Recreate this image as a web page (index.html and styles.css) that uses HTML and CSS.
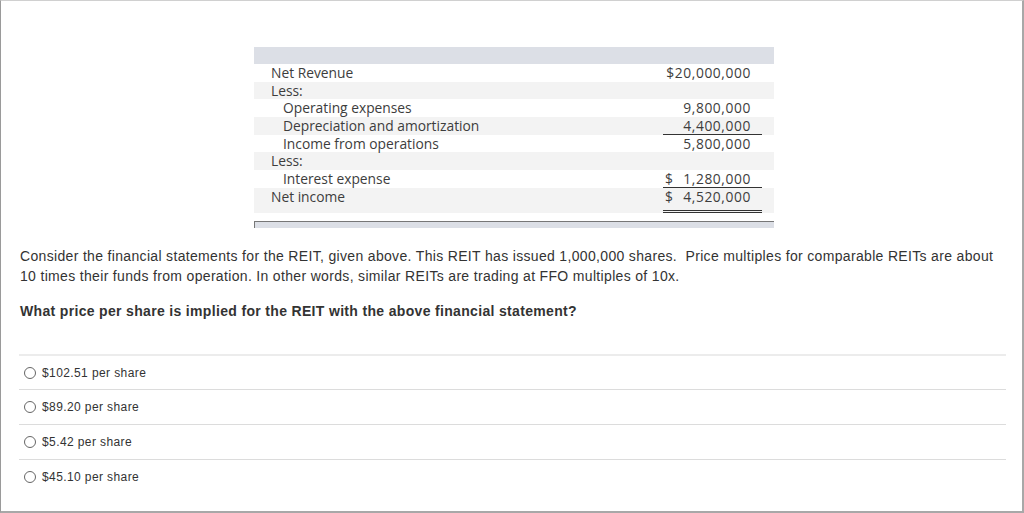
FILE: index.html
```html
<!DOCTYPE html>
<html>
<head>
<meta charset="utf-8">
<link rel="stylesheet" href="styles.css">
</head>
<body>
<div class="frame">
  <div class="figure">
    <div class="fig-head"></div>
    <div class="row white"><span class="lbl">Net Revenue</span><span class="num">$20,000,000</span></div>
    <div class="row gray"><span class="lbl">Less:</span><span class="num"></span></div>
    <div class="row white"><span class="lbl ind">Operating expenses</span><span class="num">9,800,000</span></div>
    <div class="row gray"><span class="lbl ind">Depreciation and amortization</span><span class="num ul">4,400,000</span></div>
    <div class="row white"><span class="lbl ind">Income from operations</span><span class="num">5,800,000</span></div>
    <div class="row gray"><span class="lbl">Less:</span><span class="num"></span></div>
    <div class="row white"><span class="lbl ind">Interest expense</span><span class="num ul split"><span>$</span><span>1,280,000</span></span></div>
    <div class="row gray last"><span class="lbl">Net income</span><span class="num dul split"><span>$</span><span>4,520,000</span></span></div>
    <div class="fig-foot"></div>
  </div>
  <div class="question">
    <p class="stem">Consider the financial statements for the REIT, given above. This REIT has issued 1,000,000 shares.&nbsp; Price multiples for comparable REITs are about 10 times their funds from operation. In other words, similar REITs are trading at FFO multiples of 10x.</p>
    <p class="ask">What price per share is implied for the REIT with the above financial statement?</p>
  </div>
  <ul class="options">
    <li class="opt first"><span class="radio"></span>$102.51 per share</li>
    <li class="opt"><span class="radio"></span>$89.20 per share</li>
    <li class="opt"><span class="radio"></span>$5.42 per share</li>
    <li class="opt"><span class="radio"></span>$45.10 per share</li>
  </ul>
</div>
</body>
</html>
```
FILE: styles.css
```css
html, body {
  margin: 0;
  padding: 0;
  background: #fff;
}
.frame {
  width: 1024px;
  height: 513px;
  box-sizing: border-box;
  border-top: 1px solid #d0d0d0;
  border-left: 1px solid #9a9a9a;
  border-right: 2px solid #a8a8a8;
  border-bottom: 2px solid #a8a8a8;
  overflow: hidden;
}
.figure {
  width: 520px;
  margin: 46px 0 0 253px;
  font-family: "Open Sans", sans-serif;
  font-size: 13.8px;
  color: #3d3d3d;
}
.fig-head {
  height: 17px;
  background: #dcdfe6;
}
.row {
  height: 17.7px;
  display: flex;
  justify-content: space-between;
  align-items: flex-start;
  line-height: 17.7px;
}
.row.white { background: #fff; }
.row.gray { background: #f3f3f3; }
.row.last { height: 25px; }
.lbl { padding-left: 17px; }
.lbl.ind { padding-left: 29px; }
.num {
  width: 99px;
  height: 17.7px;
  margin-right: 12px;
  padding-right: 11px;
  box-sizing: border-box;
  text-align: right;
  letter-spacing: 0.6px;
}
.num.ul { border-bottom: 1px solid #333; }
.row.last .num {
  height: 25px;
  border-bottom: 3px double #333;
}
.num.split {
  display: flex;
  justify-content: space-between;
  padding-left: 2px;
}
.fig-foot {
  margin-top: 8px;
  height: 6px;
  background: #dcdfe6;
  border-top: 1px solid #777;
  border-left: 1px solid #777;
}
.question {
  margin: 18px 0 0 19px;
  width: 975px;
  font-family: "Liberation Sans", Arial, sans-serif;
  font-size: 14px;
  letter-spacing: 0.33px;
  color: #333;
  line-height: 20.5px;
}
.question p { margin: 0; }
.question .ask {
  font-weight: bold;
  margin-top: 14px;
}
.options {
  list-style: none;
  margin: 33px 0 0 18px;
  padding: 0;
  width: 987px;
}
.opt {
  height: 34px;
  border-top: 1px solid #dcdcdc;
  display: flex;
  align-items: center;
  font-family: "Liberation Sans", Arial, sans-serif;
  font-size: 12px;
  letter-spacing: 0.4px;
  color: #333;
}
.opt.first { border-top: 2px solid #ececec; height: 33px; }
.radio {
  width: 12px;
  height: 12px;
  border: 1px solid #666;
  border-radius: 50%;
  margin: 0 6px 0 5px;
  box-sizing: border-box;
}
```
